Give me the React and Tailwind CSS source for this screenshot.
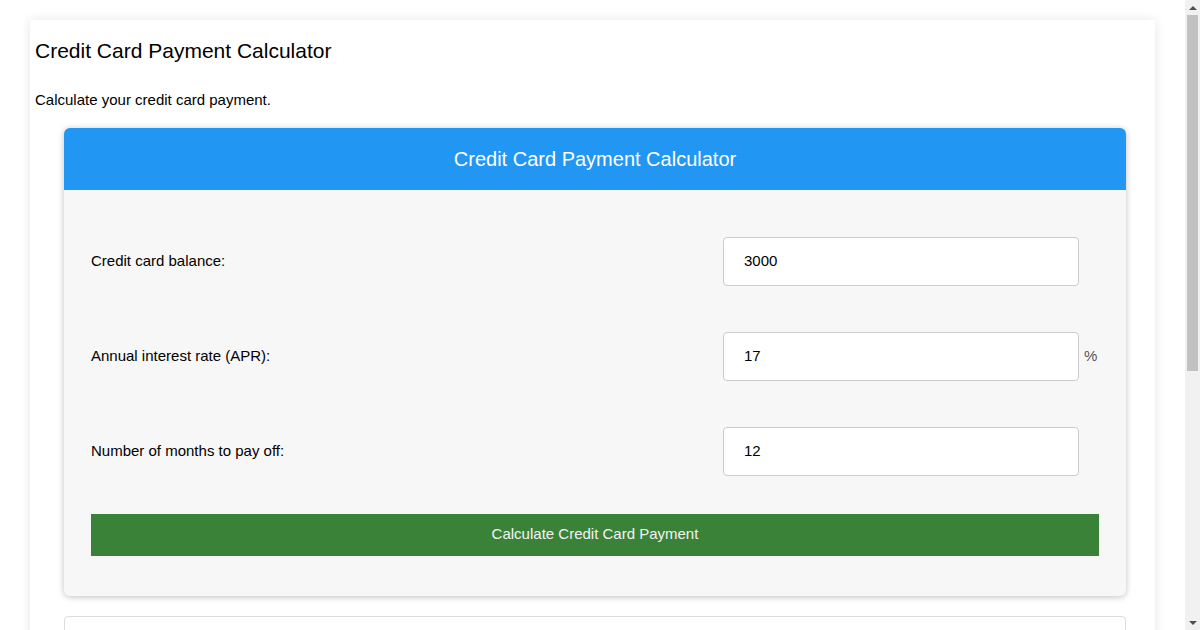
import React from "react";

const rows = [
  { label: "Credit card balance:", value: "3000" },
  { label: "Annual interest rate (APR):", value: "17", unit: "%" },
  { label: "Number of months to pay off:", value: "12" },
];

const Scrollbar = () => (
  <div className="fixed top-0 right-0 w-[15px] h-[630px] bg-[#f1f1f1] flex flex-col items-center">
    <div className="h-[15px] w-full flex items-center justify-center">
      <div className="w-0 h-0 border-x-[4px] border-x-transparent border-b-[4px] border-b-[#505050]"></div>
    </div>
    <div className="w-[11px] h-[356px] bg-[#c1c1c1]"></div>
    <div className="flex-1"></div>
    <div className="h-[15px] w-full flex items-center justify-center">
      <div className="w-0 h-0 border-x-[4px] border-x-transparent border-t-[4px] border-t-[#505050]"></div>
    </div>
  </div>
);

const App = () => {
  return (
    <div className="w-[1185px] min-h-[900px] bg-white pt-5 font-['Liberation_Sans',Arial,sans-serif] text-black">
      <div className="w-[1125px] mx-auto bg-white shadow-[0_0_10px_rgba(0,0,0,0.1)] pl-[5px] pb-10">
        <h1 className="text-[21px] leading-none pt-[20px]">Credit Card Payment Calculator</h1>
        <p className="text-[15px] mt-[28px]">Calculate your credit card payment.</p>

        <div className="mx-[29px] mt-[16px] rounded-[6px] bg-[#f7f7f7] shadow-[0_1px_6px_rgba(0,0,0,0.25)] overflow-hidden">
          <div className="h-[62px] bg-[#2196f3] flex items-center justify-center text-white text-[20px]">
            Credit Card Payment Calculator
          </div>
          <div className="px-[27px] pt-[47px] pb-[40px]">
            <div className="flex flex-col gap-[46px]">
              {rows.map((r) => (
                <div key={r.label} className="flex items-center">
                  <div className="w-[632px] shrink-0 text-[15px]">{r.label}</div>
                  <div className="w-[356px] shrink-0 h-[49px] bg-white border border-[#ccc] rounded-[4px] flex items-center pl-[20px] text-[15px]">
                    {r.value}
                  </div>
                  {r.unit && <span className="ml-[5px] text-[15px] text-[#555]">{r.unit}</span>}
                </div>
              ))}
            </div>
            <button className="mt-[38px] w-full h-[42px] bg-[#3b8239] text-[#f2f2f2] text-[15px]">
              Calculate Credit Card Payment
            </button>
          </div>
        </div>

        <div className="mx-[29px] mt-[20px] h-[200px] bg-white border border-[#ddd] rounded-[4px]"></div>
      </div>
      <Scrollbar />
    </div>
  );
};

export default App;
